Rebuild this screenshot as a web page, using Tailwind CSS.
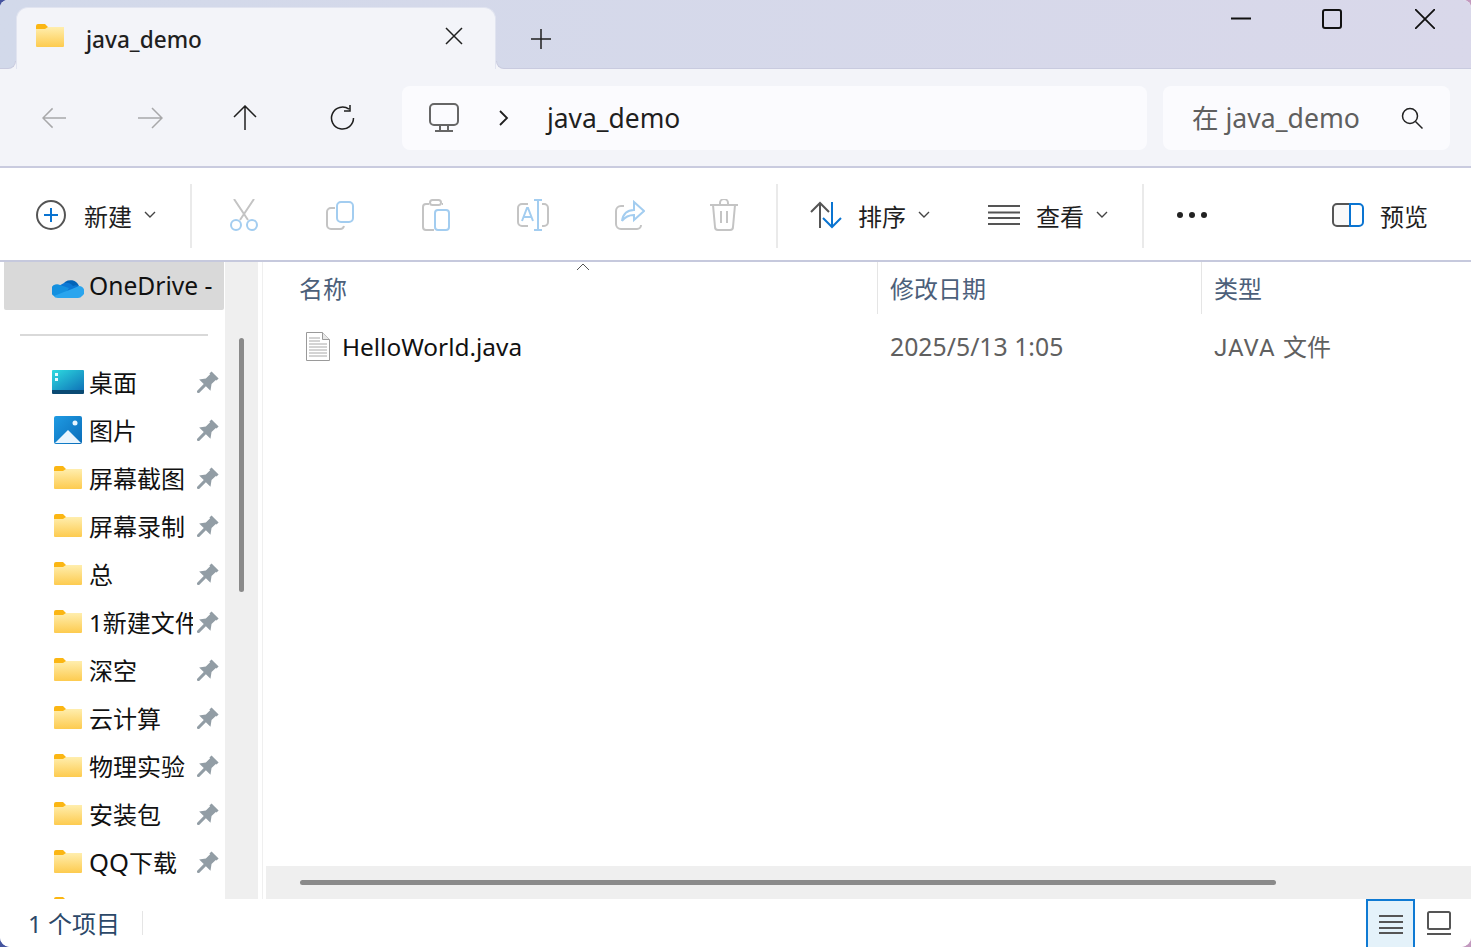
<!DOCTYPE html>
<html lang="zh-CN">
<head>
  <meta charset="UTF-8">
  <title>java_demo - 文件资源管理器</title>
  <script src="https://cdn.jsdelivr.net/npm/@tailwindcss/browser@4"></script>
</head>
<body class="bg-gradient-to-r from-[#45549f] to-[#c39abf] overflow-hidden">
<svg width="0" height="0" class="absolute">
  <defs>
    <linearGradient id="fold" x1="0" y1="0" x2="0" y2="1"><stop offset="0" stop-color="#ffeeae"/><stop offset="1" stop-color="#fdcb4f"/></linearGradient>
    <symbol id="folder" viewBox="0 0 28 24">
      <path d="M0 2a2 2 0 0 1 2-2h7l3 3h16v3H0z" fill="#fbb613"/>
      <path d="M0 5h9l3-2h16v19a1 1 0 0 1-1 1H1a1 1 0 0 1-1-1z" fill="url(#fold)"/>
    </symbol>
    <symbol id="pin" viewBox="0 0 22 22">
      <path transform="rotate(45 11 11)" d="M6 1h10v3h-1v6l4 5.500h-6.500V26h-3V15.500H3L7 10V4H6z" fill="#929da5"/>
    </symbol>
  </defs>
</svg>

<div class="w-[1471px] h-[947px] flex flex-col bg-white rounded-t-[8px] rounded-b-[10px] overflow-hidden text-[#1a1a1a] font-['Noto_Sans','Noto_Sans_CJK_SC',sans-serif] text-[24px]">

  <!-- tab strip -->
  <div class="h-[69px] shrink-0 flex bg-gradient-to-r from-[#d2d9ea] to-[#d9d8ea] border-b border-[#c9cbdf] pl-[16px] pt-[7px]">
    <div class="relative w-[480px] h-[62px] -mb-px bg-[#f3f4f9] rounded-t-[12px] border border-b-0 border-[#e1e4f0] flex items-center pl-[19px] pr-[31px]">
      <div class="absolute -left-[9px] bottom-0 w-[8px] h-[8px] bg-[#f3f4f9]">
        <div class="w-full h-full bg-[#d2d9ea] border-r border-b border-[#c9cbdf] rounded-br-[8px]"></div>
      </div>
      <div class="absolute -right-[9px] bottom-0 w-[8px] h-[8px] bg-[#f3f4f9]">
        <div class="w-full h-full bg-[#d4d9ea] border-l border-b border-[#c9cbdf] rounded-bl-[8px]"></div>
      </div>
      <svg class="w-[28px] h-[24px] mb-[6px]"><use href="#folder"/></svg>
      <span class="ml-[22px] flex-1 mt-[3px] text-[22.6px] font-medium text-[#1f1f1f]">java_demo</span>
      <svg class="w-[20px] h-[20px] mb-[6px]" viewBox="0 0 20 20" fill="none" stroke="#1f1f1f" stroke-width="1.500"><path d="M2 2l16 16M18 2 2 18"/></svg>
    </div>
    <svg class="w-[20px] h-[20px] ml-[35px] mt-[22px]" viewBox="0 0 20 20" fill="none" stroke="#1f1f1f" stroke-width="1.500"><path d="M10 0v20M0 10h20"/></svg>
    <div class="ml-auto flex">
      <svg class="w-[20px] h-[20px] mr-[71px] mt-[2px]" viewBox="0 0 20 20" stroke="#111" stroke-width="2"><path d="M0 9.500h20"/></svg>
      <svg class="w-[20px] h-[20px] mr-[73px] mt-[2px]" viewBox="0 0 20 20" fill="none" stroke="#111" stroke-width="2"><rect x="1" y="1" width="18" height="18" rx="2"/></svg>
      <svg class="w-[20px] h-[20px] mr-[36px] mt-[2px]" viewBox="0 0 20 20" fill="none" stroke="#111" stroke-width="1.800"><path d="M0 0l20 20M20 0 0 20"/></svg>
    </div>
  </div>

  <!-- address bar -->
  <div class="h-[99px] shrink-0 flex items-center bg-[#f3f4f9] border-b-2 border-[#c9cbdf]">
    <div class="w-[402px] shrink-0 flex items-center">
      <svg class="w-[25px] h-[24px] ml-[42px]" viewBox="0 0 26 24" fill="none" stroke="#a8a8aa" stroke-width="1.500"><path d="M25 12H2M11 2 1 12l10 10"/></svg>
      <svg class="w-[26px] h-[24px] ml-[70px]" viewBox="0 0 26 24" fill="none" stroke="#a8a8aa" stroke-width="1.500"><path d="M1 12h23M15 2l10 10-10 10"/></svg>
      <svg class="w-[24px] h-[26px] ml-[70px]" viewBox="0 0 24 26" fill="none" stroke="#1f1f1f" stroke-width="1.500"><path d="M12 25V2M1 12 12 1l11 11"/></svg>
      <svg class="w-[26px] h-[26px] ml-[73px]" viewBox="0 0 26 26" fill="none" stroke="#1f1f1f" stroke-width="1.500"><path d="M23.500 13A11 11 0 1 1 19 4.200M20 0v6h-6"/></svg>
    </div>
    <div class="w-[745px] h-[64px] shrink-0 bg-[#fbfbfe] rounded-[8px] flex items-center">
      <svg class="w-[30px] h-[30px] ml-[27px]" viewBox="0 0 30 30" fill="none" stroke="#666" stroke-width="2"><rect x="1" y="1" width="28" height="21" rx="4"/><path d="M11 22v5M19 22v5M6 28h18"/></svg>
      <svg class="w-[12px] h-[18px] ml-[39px]" viewBox="0 0 12 18" fill="none" stroke="#1f1f1f" stroke-width="1.800"><path d="M2 2l7 7-7 7"/></svg>
      <span class="ml-[37px] text-[#1f1f1f] text-[26.4px] mt-[2px]">java_demo</span>
    </div>
    <div class="w-[287px] h-[64px] ml-[16px] shrink-0 bg-[#fbfbfe] rounded-[8px] flex items-center pl-[29px]">
      <span class="flex-1 text-[#5f5f5f] text-[26.6px] mt-[2px]">在 java_demo</span>
      <svg class="w-[22px] h-[22px] mr-[27px]" viewBox="0 0 22 22" fill="none" stroke="#222" stroke-width="1.500"><circle cx="9" cy="9" r="7.500"/><path d="M14.500 14.500l7 7"/></svg>
    </div>
  </div>

  <!-- command bar -->
  <div class="h-[94px] shrink-0 flex items-center bg-white border-b-2 border-[#c6c9dd] pt-[2px] text-[#1f1f1f]">
    <svg class="w-[30px] h-[30px] ml-[36px]" viewBox="0 0 30 30" fill="none"><circle cx="15" cy="15" r="14" stroke="#555" stroke-width="2"/><path d="M15 8v14M8 15h14" stroke="#0a74d1" stroke-width="2"/></svg>
    <span class="ml-[18px] mt-[4px]">新建</span>
    <svg class="w-[12px] h-[8px] ml-[12px]" viewBox="0 0 12 8" fill="none" stroke="#444" stroke-width="1.400"><path d="M1 1l5 5 5-5"/></svg>
    <div class="w-[2px] h-[64px] bg-[#eaeaea] ml-[34px] mt-[2px]"></div>

    <svg class="w-[28px] h-[32px] ml-[38px]" viewBox="0 0 28 32" fill="none" stroke-width="2"><path d="M4 0l14 21M24 0 10 21" stroke="#c4c4c4"/><circle cx="6" cy="26" r="5" stroke="#a3cdf0"/><circle cx="22" cy="26" r="5" stroke="#a3cdf0"/></svg>
    <svg class="w-[28px] h-[29px] ml-[68px]" viewBox="0 0 28 29" fill="none" stroke-width="2"><path d="M9 7H5a4 4 0 0 0-4 4v13a4 4 0 0 0 4 4h9a4 4 0 0 0 4-3" stroke="#c4c4c4"/><rect x="11" y="1" width="16" height="20" rx="4" stroke="#a3cdf0"/></svg>
    <svg class="w-[28px] h-[32px] ml-[68px]" viewBox="0 0 28 32" fill="none" stroke-width="2"><path d="M7 5H4a3 3 0 0 0-3 3v20a3 3 0 0 0 3 3h8M21 5h-1" stroke="#c4c4c4"/><rect x="8" y="1" width="11" height="5" rx="2.500" stroke="#c4c4c4"/><rect x="13" y="11" width="14" height="20" rx="3" stroke="#a3cdf0"/></svg>
    <svg class="w-[32px] h-[32px] ml-[67px]" viewBox="0 0 32 32" fill="none" stroke-width="2"><path d="M11 5H5a4 4 0 0 0-4 4v14a4 4 0 0 0 4 4h6M25 5h2a4 4 0 0 1 4 4v14a4 4 0 0 1-4 4h-2" stroke="#c4c4c4"/><path d="M21 1v30M17 1h8M17 31h8M5 22l5-13h1l5 13M7 18h8" stroke="#a3cdf0"/></svg>
    <svg class="w-[30px] h-[30px] ml-[66px]" viewBox="0 0 30 30" fill="none" stroke-width="2"><path d="M9 6H6a5 5 0 0 0-5 5v13a5 5 0 0 0 5 5h16a4 4 0 0 0 4-4" stroke="#c4c4c4"/><path d="M19 2l10 9-10 9v-5c-5 0-9 2-12 6 1-7 5-11 12-11z" stroke="#a3cdf0"/></svg>
    <svg class="w-[30px] h-[32px] ml-[64px]" viewBox="0 0 30 32" fill="none" stroke="#c4c4c4" stroke-width="2"><path d="M1 6h28M11 6V4a3 3 0 0 1 8 0v2M4 6l2 22a3 3 0 0 0 3 3h12a3 3 0 0 0 3-3l2-22M12 12v12M18 12v12"/></svg>
    <div class="w-[2px] h-[64px] bg-[#eaeaea] ml-[37px] mt-[2px]"></div>

    <svg class="w-[32px] h-[28px] ml-[32px]" viewBox="0 0 32 28" fill="none" stroke-width="2"><path d="M10 27V2M1 11l9-9 9 9" stroke="#555"/><path d="M22 1v25M13 17l9 9 9-9" stroke="#0a74d1"/></svg>
    <span class="ml-[16px] mt-[4px]">排序</span>
    <svg class="w-[12px] h-[8px] ml-[12px]" viewBox="0 0 12 8" fill="none" stroke="#444" stroke-width="1.400"><path d="M1 1l5 5 5-5"/></svg>
    <svg class="w-[32px] h-[20px] ml-[58px]" viewBox="0 0 32 20" fill="none" stroke="#555" stroke-width="2"><path d="M0 1h32M0 7.500h32M0 13h32M0 19h32"/></svg>
    <span class="ml-[16px] mt-[4px]">查看</span>
    <svg class="w-[12px] h-[8px] ml-[12px]" viewBox="0 0 12 8" fill="none" stroke="#444" stroke-width="1.400"><path d="M1 1l5 5 5-5"/></svg>
    <div class="w-[2px] h-[64px] bg-[#eaeaea] ml-[34px] mt-[2px]"></div>
    <svg class="w-[32px] h-[8px] ml-[32px]" viewBox="0 0 32 8" fill="#222"><circle cx="4" cy="4" r="3"/><circle cx="16" cy="4" r="3"/><circle cx="28" cy="4" r="3"/></svg>
    <svg class="w-[32px] h-[24px] ml-[124px]" viewBox="0 0 32 24" fill="none" stroke-width="2"><path d="M18 1H5a4 4 0 0 0-4 4v14a4 4 0 0 0 4 4h13" stroke="#555" fill="#f9f9f9"/><path d="M18 1h9a4 4 0 0 1 4 4v14a4 4 0 0 1-4 4h-9z" stroke="#0a74d1"/></svg>
    <span class="ml-[16px] mt-[4px]">预览</span>
  </div>

  <!-- body -->
  <div class="flex-1 min-h-0 flex">
    <!-- nav pane -->
    <aside class="w-[225px] shrink-0 overflow-hidden text-[#111] pl-[4px] pr-px">
      <div class="h-[48px] bg-[#d9d9d9] rounded-b-[2px] flex items-center pl-[48px] whitespace-nowrap overflow-hidden">
        <svg class="w-[32px] h-[21px] shrink-0 mt-[2px]" viewBox="0 0 32 21"><path d="M12 6a9 9 0 0 1 15 3l-6 5-9-4z" fill="#0364b8"/><path d="M12 6 3 11l6 6 12-3 6-5c-2-1-4-1-6 0a9 9 0 0 0-9-3z" fill="#0c78d4"/><path d="M8 8a6 6 0 0 0-6 11h10l5-8z" fill="#1490df"/><path d="M27 9a5.500 5.500 0 0 1 3 10c-1 1-2 2-4 2H6c-2 0-4-1-4-2l10-4 8-3z" fill="#2aa5ee"/></svg>
        <span class="ml-[5px] text-[24.6px]">OneDrive -</span>
      </div>
      <div class="h-[2px] bg-[#d9d9d9] ml-[16px] mr-[16px] mt-[24px]"></div>

      <ul class="mt-[22px] [&_span]:mt-[2px]">
        <li class="h-[48px] flex items-center pl-[48px]">
          <svg class="w-[32px] h-[24px] shrink-0" viewBox="0 0 32 24"><defs><linearGradient id="desk" x1="0" y1="0" x2="1" y2="1"><stop offset="0" stop-color="#2ddbe0"/><stop offset="1" stop-color="#0f73b8"/></linearGradient></defs><path d="M1 0h30a1 1 0 0 1 1 1v19H0V1a1 1 0 0 1 1-1z" fill="url(#desk)"/><path d="M0 20h32v3a1 1 0 0 1-1 1H1a1 1 0 0 1-1-1z" fill="#0a4a73"/><rect x="3" y="3" width="3" height="3" fill="#e6fbff"/><rect x="3" y="8" width="3" height="3" fill="#e6fbff"/></svg>
          <span class="ml-[5px] flex-1">桌面</span>
          <svg class="w-[22px] h-[22px] mr-[5px] shrink-0"><use href="#pin"/></svg>
        </li>
        <li class="h-[48px] flex items-center pl-[50px]">
          <svg class="w-[28px] h-[28px] shrink-0" viewBox="0 0 28 28"><defs><linearGradient id="pic" x1="0" y1="0" x2="1" y2="1"><stop offset="0" stop-color="#1f9be3"/><stop offset="1" stop-color="#0a6cb8"/></linearGradient></defs><rect width="28" height="28" rx="2" fill="url(#pic)"/><circle cx="21" cy="7" r="2.500" fill="#e8f6ff"/><path d="M1 27 14 14l13 13z" fill="#eaf5fd"/></svg>
          <span class="ml-[7px] flex-1">图片</span>
          <svg class="w-[22px] h-[22px] mr-[5px] shrink-0"><use href="#pin"/></svg>
        </li>
        <li class="h-[48px] flex items-center pl-[50px]"><svg class="w-[28px] h-[24px] shrink-0"><use href="#folder"/></svg><span class="ml-[7px] flex-1 whitespace-nowrap">屏幕截图</span><svg class="w-[22px] h-[22px] mr-[5px] shrink-0"><use href="#pin"/></svg></li>
        <li class="h-[48px] flex items-center pl-[50px]"><svg class="w-[28px] h-[24px] shrink-0"><use href="#folder"/></svg><span class="ml-[7px] flex-1 whitespace-nowrap">屏幕录制</span><svg class="w-[22px] h-[22px] mr-[5px] shrink-0"><use href="#pin"/></svg></li>
        <li class="h-[48px] flex items-center pl-[50px]"><svg class="w-[28px] h-[24px] shrink-0"><use href="#folder"/></svg><span class="ml-[7px] flex-1">总</span><svg class="w-[22px] h-[22px] mr-[5px] shrink-0"><use href="#pin"/></svg></li>
        <li class="h-[48px] flex items-center pl-[50px]"><svg class="w-[28px] h-[24px] shrink-0"><use href="#folder"/></svg><span class="ml-[7px] w-[104px] whitespace-nowrap overflow-hidden">1新建文件夹</span><svg class="w-[22px] h-[22px] ml-auto mr-[5px] shrink-0"><use href="#pin"/></svg></li>
        <li class="h-[48px] flex items-center pl-[50px]"><svg class="w-[28px] h-[24px] shrink-0"><use href="#folder"/></svg><span class="ml-[7px] flex-1">深空</span><svg class="w-[22px] h-[22px] mr-[5px] shrink-0"><use href="#pin"/></svg></li>
        <li class="h-[48px] flex items-center pl-[50px]"><svg class="w-[28px] h-[24px] shrink-0"><use href="#folder"/></svg><span class="ml-[7px] flex-1">云计算</span><svg class="w-[22px] h-[22px] mr-[5px] shrink-0"><use href="#pin"/></svg></li>
        <li class="h-[48px] flex items-center pl-[50px]"><svg class="w-[28px] h-[24px] shrink-0"><use href="#folder"/></svg><span class="ml-[7px] flex-1 whitespace-nowrap">物理实验</span><svg class="w-[22px] h-[22px] mr-[5px] shrink-0"><use href="#pin"/></svg></li>
        <li class="h-[48px] flex items-center pl-[50px]"><svg class="w-[28px] h-[24px] shrink-0"><use href="#folder"/></svg><span class="ml-[7px] flex-1">安装包</span><svg class="w-[22px] h-[22px] mr-[5px] shrink-0"><use href="#pin"/></svg></li>
        <li class="h-[48px] flex items-center pl-[50px]"><svg class="w-[28px] h-[24px] shrink-0"><use href="#folder"/></svg><span class="ml-[7px] flex-1"><span class="text-[25.6px]">QQ</span>下载</span><svg class="w-[22px] h-[22px] mr-[5px] shrink-0"><use href="#pin"/></svg></li>
        <li class="h-[48px] flex items-start pl-[50px] pt-[11px]"><svg class="w-[28px] h-[24px] shrink-0"><use href="#folder"/></svg></li>
      </ul>
    </aside>
    <!-- nav scrollbar -->
    <div class="w-[33px] shrink-0 bg-[#efefef] pt-[76px] pl-[14px]">
      <div class="w-[5px] h-[254px] bg-[#8a8a8a] rounded-full"></div>
    </div>
    <div class="w-[8px] shrink-0 pl-[4px]"><div class="w-px h-full bg-[#efefef]"></div></div>

    <!-- file list -->
    <main class="flex-1 min-w-0 flex flex-col">
      <div class="flex-1 relative">
        <svg class="absolute left-[310px] top-[1px] w-[14px] h-[8px]" viewBox="0 0 14 8" fill="none" stroke="#555"><path d="M1 7l6-6 6 6"/></svg>
        <div class="h-[52px] flex text-[#4c607a]">
          <div class="w-[612px] pl-[33px] pt-[9px] border-r border-[#e5e5e5]">名称</div>
          <div class="w-[324px] pl-[12px] pt-[9px] border-r border-[#e5e5e5]">修改日期</div>
          <div class="pl-[12px] pt-[9px]">类型</div>
        </div>
        <div class="h-[64px] flex items-center pt-[2px]">
          <div class="w-[612px] pl-[40px] flex items-center text-[#111]">
            <svg class="w-[24px] h-[29px] shrink-0" viewBox="0 0 24 29" fill="none"><path d="M.5.500h16l7 7v21H.5z" fill="#fff" stroke="#9a9a9a"/><path d="M16.500.500v7h7" fill="#e8e8e8" stroke="#9a9a9a"/><path d="M3 6h11M3 9h11M3 12h18M3 15h18M3 18h18M3 21h18M3 24h18" stroke="#a8a8a8"/></svg>
            <span class="ml-[12px] text-[24.4px]">HelloWorld.java</span>
          </div>
          <div class="w-[324px] pl-[12px] text-[24.8px] text-[#606060]">2025/5/13 1:05</div>
          <div class="pl-[12px] text-[#606060]"><span class="font-['Roboto'] tracking-[1px] mr-px">JAVA</span> 文件</div>
        </div>
      </div>
      <!-- horizontal scrollbar -->
      <div class="h-[33px] shrink-0 bg-[#efefef] pl-[34px] pt-[14px]">
        <div class="w-[976px] h-[5px] bg-[#8a8a8a] rounded-full"></div>
      </div>
    </main>
  </div>

  <!-- status bar -->
  <div class="h-[48px] shrink-0 flex items-center bg-white">
    <span class="ml-[28px] mt-[2px] text-[#2c4868]">1 个项目</span>
    <div class="w-px h-[24px] bg-[#e5e5e5] ml-[22px]"></div>
    <div class="ml-auto w-[49px] h-[48px] bg-[#e4f2fa] border-2 border-b-0 border-[#0f7ad3] flex items-center justify-center">
      <svg class="w-[24px] h-[20px]" viewBox="0 0 24 20" fill="none" stroke="#555" stroke-width="2"><path d="M0 2h24M0 8h24M0 14h24M0 19h24"/></svg>
    </div>
    <svg class="w-[24px] h-[24px] ml-[12px] mr-[20px]" viewBox="0 0 24 24" fill="none" stroke="#555" stroke-width="2"><rect x="1" y="1" width="22" height="17" rx="1.500"/><path d="M0 23h24"/></svg>
  </div>
</div>
</body>
</html>
